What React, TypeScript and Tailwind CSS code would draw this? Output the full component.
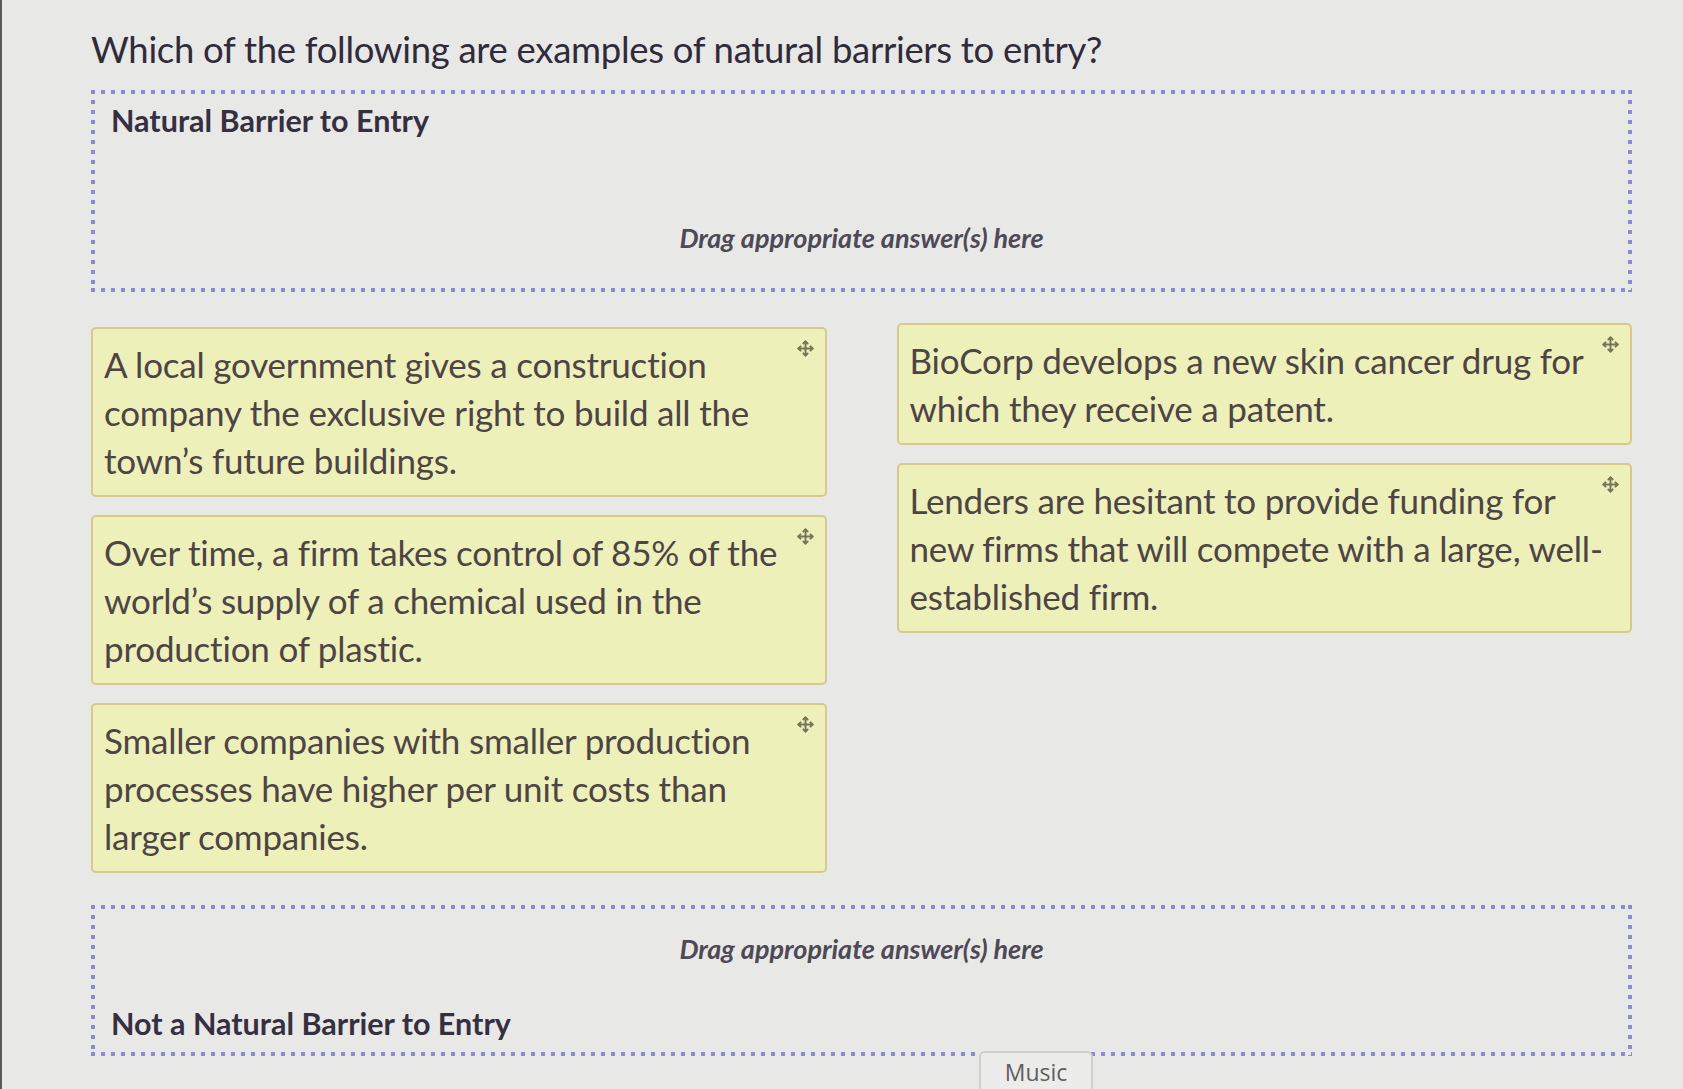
import { Move } from 'lucide-react'

const leftCards = [
  'A local government gives a construction company the exclusive right to build all the town’s future buildings.',
  'Over time, a firm takes control of 85% of the world’s supply of a chemical used in the production of plastic.',
  'Smaller companies with smaller production processes have higher per unit costs than larger companies.',
]

const rightCards = [
  'BioCorp develops a new skin cancer drug for which they receive a patent.',
  'Lenders are hesitant to provide funding for new firms that will compete with a large, well-established firm.',
]

const dotted =
  'bg-no-repeat [background-image:repeating-linear-gradient(90deg,#8a8ad8_0_4px,transparent_4px_10px),repeating-linear-gradient(90deg,#8a8ad8_0_4px,transparent_4px_10px),repeating-linear-gradient(180deg,#8a8ad8_0_4px,transparent_4px_10px),repeating-linear-gradient(180deg,#8a8ad8_0_4px,transparent_4px_10px)] [background-size:100%_4px,100%_4px,4px_100%,4px_100%] [background-position:0_0,0_100%,0_0,100%_0]'

function Card({ text }: { text: string }) {
  return (
    <div className="relative rounded-[5px] border-2 border-[#d6c98c] bg-[#eef0b9] pl-[11px] pr-[16px] py-[11px]">
      <p className="text-[35px] leading-[48px] text-[#4d4545] tracking-[-0.2px]">{text}</p>
      {/* drag handle */}
      <Move className="absolute right-[11px] top-[11px] h-[17px] w-[17px] text-[#76755a]" strokeWidth={2.8} />
    </div>
  )
}

export default function App() {
  return (
    <div className="h-[1089px] overflow-hidden bg-[#e8e8e6] border-l-2 border-[#5a5a5a] font-['Lato','Open_Sans',sans-serif]">
      <div className="pl-[89px] pr-[51px] pt-[25px]">
        <h1 className="text-[36.5px] leading-[48px] text-[#2f2b3a] tracking-[-0.3px]">
          Which of the following are examples of natural barriers to entry?
        </h1>

        {/* Top drop zone */}
        <div className={`mt-[17px] h-[202px] ${dotted} px-[20px] pt-[10px]`}>
          <div className="text-[30.5px] font-bold leading-[40px] text-[#35303f]">Natural Barrier to Entry</div>
          <div className="mt-[81px] text-center text-[27px] font-bold italic leading-[34px] text-[#4d4a56]">
            Drag appropriate answer(s) here
          </div>
        </div>

        {/* Answer choices */}
        <div className="mt-[35px] grid grid-cols-2 gap-x-[70px] items-start">
          <div className="flex flex-col gap-[18px]">
            {leftCards.map((t) => (
              <Card key={t} text={t} />
            ))}
          </div>
          <div className="flex flex-col gap-[18px] -mt-[4px]">
            {rightCards.map((t) => (
              <Card key={t} text={t} />
            ))}
          </div>
        </div>

        {/* Bottom drop zone */}
        <div className={`mt-[32px] h-[151px] ${dotted} px-[20px] pt-[27px]`}>
          <div className="text-center text-[27px] font-bold italic leading-[34px] text-[#4d4a56]">
            Drag appropriate answer(s) here
          </div>
          <div className="mt-[37px] text-[30.5px] font-bold leading-[40px] text-[#35303f]">Not a Natural Barrier to Entry</div>
        </div>

        <div className="ml-[888px] -mt-[5px] flex">
          <button className="h-[40px] w-[114px] rounded-t-[6px] border-2 border-b-0 border-[#cfcfcd] bg-[#ececea] text-[23px] leading-[30px] text-[#5e5e62] font-['Open_Sans',sans-serif]">
            Music
          </button>
        </div>
      </div>
    </div>
  )
}
